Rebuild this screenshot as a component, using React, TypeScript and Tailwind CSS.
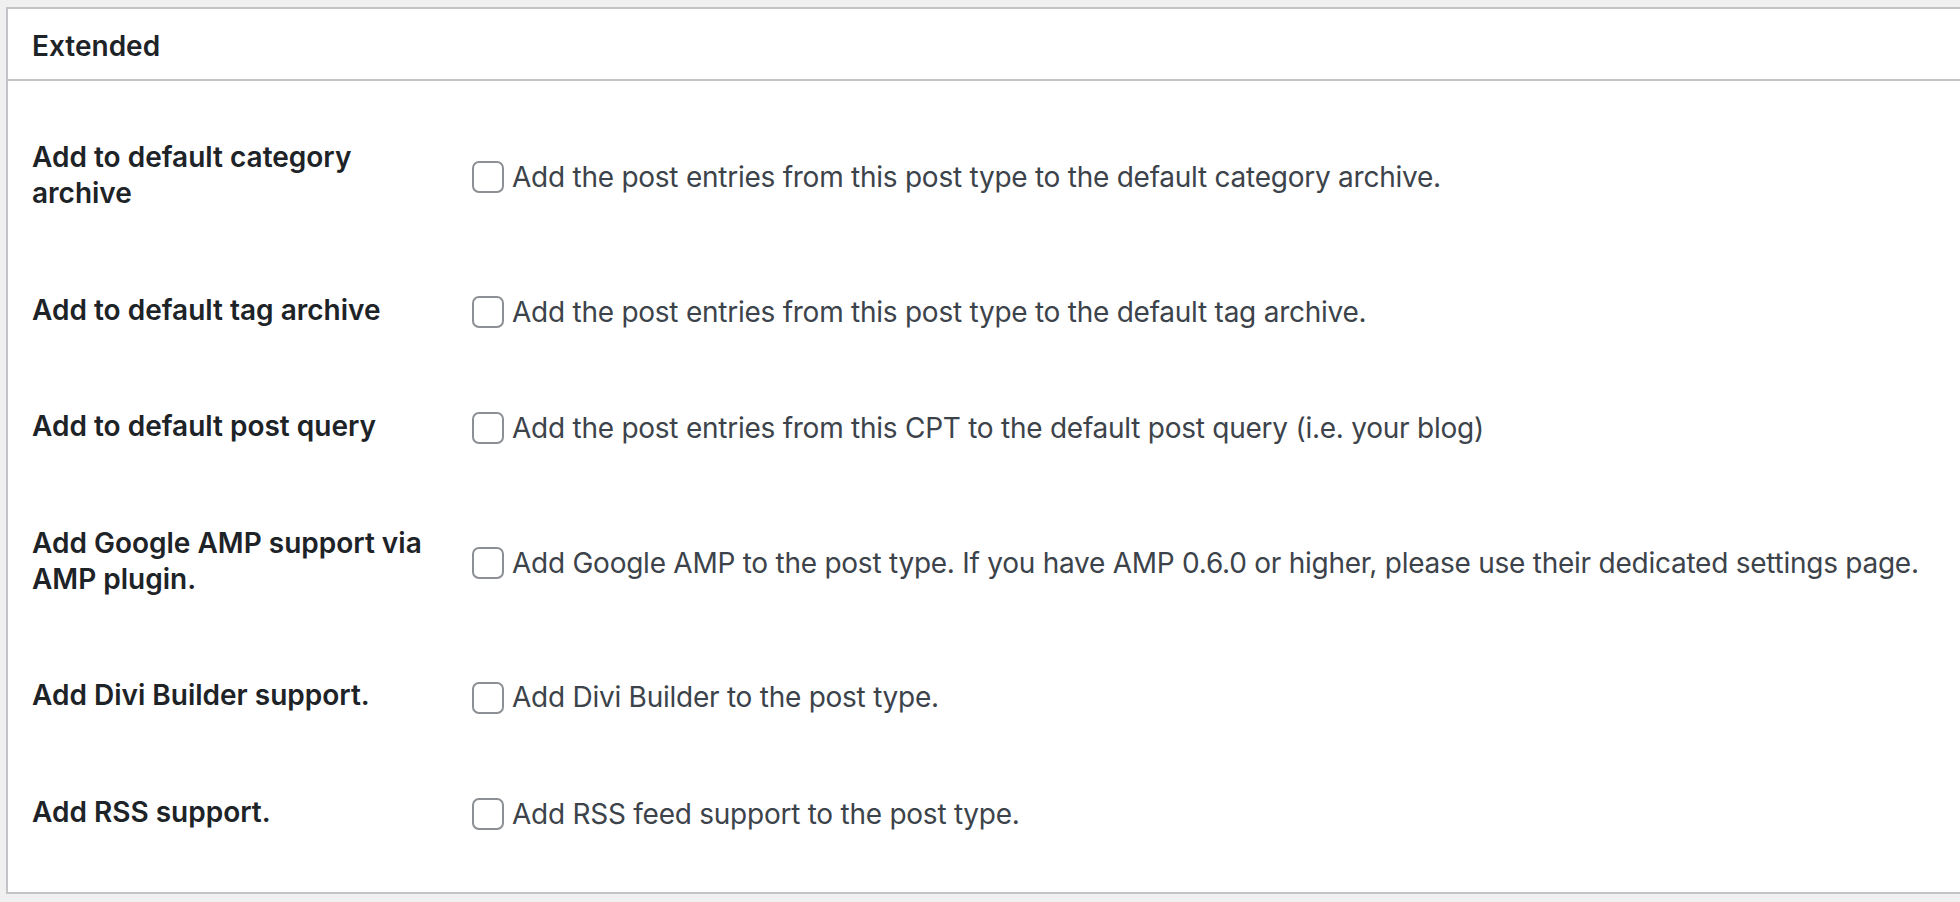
interface Setting {
  label: string;
  description: string;
}

const settings: Setting[] = [
  {
    label: "Add to default category archive",
    description: "Add the post entries from this post type to the default category archive.",
  },
  {
    label: "Add to default tag archive",
    description: "Add the post entries from this post type to the default tag archive.",
  },
  {
    label: "Add to default post query",
    description: "Add the post entries from this CPT to the default post query (i.e. your blog)",
  },
  {
    label: "Add Google AMP support via AMP plugin.",
    description:
      "Add Google AMP to the post type. If you have AMP 0.6.0 or higher, please use their dedicated settings page.",
  },
  {
    label: "Add Divi Builder support.",
    description: "Add Divi Builder to the post type.",
  },
  {
    label: "Add RSS support.",
    description: "Add RSS feed support to the post type.",
  },
];

function App() {
  return (
    <div
      className="min-h-screen overflow-hidden bg-[#f0f0f1] pt-[7px] pl-[6px]"
      style={{ fontFamily: 'Inter, "Noto Sans", "Liberation Sans", sans-serif' }}
    >
      <div className="border-2 border-r-0 border-[#c3c4c7] bg-white">
        <div className="flex h-[72px] items-center border-b-2 border-[#c3c4c7] px-6 pt-[5px]">
          <h2 className="text-[28px] font-semibold leading-[39px] text-[#1d2327]">Extended</h2>
        </div>

        <div className="px-6 pt-[20px] pb-[20px]">
          {settings.map((s, i) => (
            <div key={i} className="grid grid-cols-[420px_1fr] items-center">
              <div className="w-[400px] pt-[38px] pb-[42px] text-[28px] font-semibold leading-[36.4px] text-[#1d2327]">
                {s.label}
              </div>
              <label className="flex items-center gap-2 pl-5 text-[28px] leading-[36.4px] tracking-[-0.25px] text-[#3c434a]">
                <span className="h-8 w-8 shrink-0 rounded-[7px] border-2 border-[#8c8f94] bg-white" />
                <span className="whitespace-nowrap">{s.description}</span>
              </label>
            </div>
          ))}
        </div>
      </div>
    </div>
  );
}

export default App;
